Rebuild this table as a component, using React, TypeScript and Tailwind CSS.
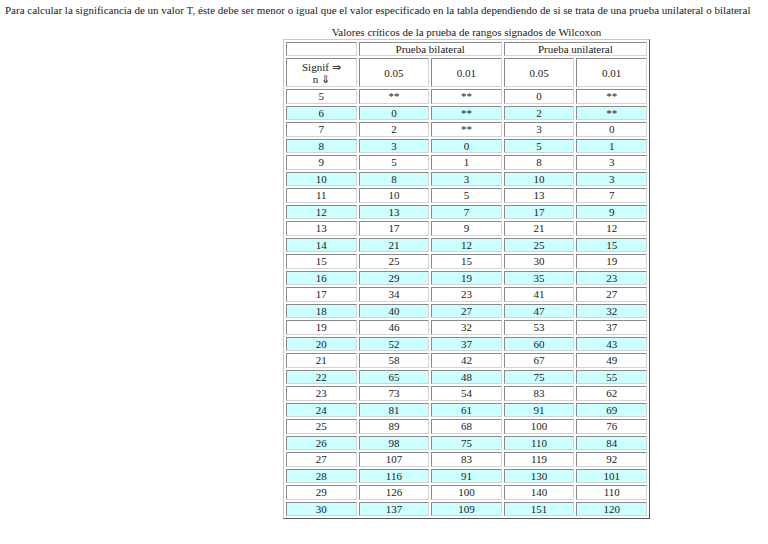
const rows: [number, string, string, string, string][] = [
  [5, "**", "**", "0", "**"],
  [6, "0", "**", "2", "**"],
  [7, "2", "**", "3", "0"],
  [8, "3", "0", "5", "1"],
  [9, "5", "1", "8", "3"],
  [10, "8", "3", "10", "3"],
  [11, "10", "5", "13", "7"],
  [12, "13", "7", "17", "9"],
  [13, "17", "9", "21", "12"],
  [14, "21", "12", "25", "15"],
  [15, "25", "15", "30", "19"],
  [16, "29", "19", "35", "23"],
  [17, "34", "23", "41", "27"],
  [18, "40", "27", "47", "32"],
  [19, "46", "32", "53", "37"],
  [20, "52", "37", "60", "43"],
  [21, "58", "42", "67", "49"],
  [22, "65", "48", "75", "55"],
  [23, "73", "54", "83", "62"],
  [24, "81", "61", "91", "69"],
  [25, "89", "68", "100", "76"],
  [26, "98", "75", "110", "84"],
  [27, "107", "83", "119", "92"],
  [28, "116", "91", "130", "101"],
  [29, "126", "100", "140", "110"],
  [30, "137", "109", "151", "120"],
];

const cell =
  "border border-t-[#8a8a8a] border-l-[#8a8a8a] border-r-[#d4d4d4] border-b-[#d4d4d4] p-0 text-center align-middle";

export default function App() {
  return (
    <div className="min-h-[544px] w-[768px] bg-white font-['Liberation_Serif',serif] text-[11px] leading-[12px] text-[#1a1a1a]">
      <p className="pl-[5px] pt-[4px] whitespace-nowrap">
        Para calcular la significancia de un valor T, éste debe ser menor o
        igual que el valor especificado en la tabla dependiendo de si se trata
        de una prueba unilateral o bilateral
      </p>

      <table className="ml-[283px] mt-[10px] w-[367px] border-separate border-spacing-[2px] border border-t-[#c8c8c8] border-l-[#c8c8c8] border-r-[#555] border-b-[#555] table-fixed">
        <caption className="pb-[1px] text-center">
          Valores críticos de la prueba de rangos signados de Wilcoxon
        </caption>
        <tbody>
          <tr className="h-[14px]">
            <td className={cell}></td>
            <td className={cell} colSpan={2}>
              Prueba bilateral
            </td>
            <td className={cell} colSpan={2}>
              Prueba unilateral
            </td>
          </tr>
          <tr className="h-[29px]">
            <td className={cell}>
              Signif ⇒
              <br />n ⇓
            </td>
            <td className={cell}>0.05</td>
            <td className={cell}>0.01</td>
            <td className={cell}>0.05</td>
            <td className={cell}>0.01</td>
          </tr>
          {rows.map((r, i) => (
            <tr
              key={r[0]}
              className={i % 2 === 1 ? "h-[14.5px] bg-[#ccffff]" : "h-[14.5px] bg-white"}
            >
              {r.map((v, j) => (
                <td key={j} className={cell}>
                  {v}
                </td>
              ))}
            </tr>
          ))}
        </tbody>
      </table>
    </div>
  );
}
